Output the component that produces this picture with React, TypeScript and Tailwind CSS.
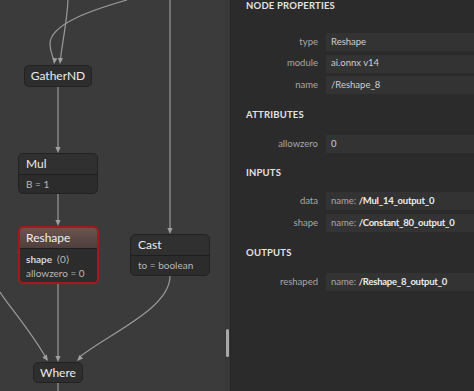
import React from "react";

const font = { fontFamily: 'Lato, "DejaVu Sans", sans-serif' };

function Arrow({ x, y, angle = 0 }: { x: number; y: number; angle?: number }) {
  return (
    <polygon
      points="-2.6,-6 2.6,-6 0,0"
      fill="#a0a0a0"
      transform={`translate(${x} ${y}) rotate(${angle})`}
    />
  );
}

function Edges() {
  return (
    <svg className="absolute inset-0" width={230} height={391} viewBox="0 0 230 391">
      <g fill="none" stroke="#9a9a9a" strokeWidth={1.2}>
        <path d="M68,0 C67,22 62,44 60.5,59" />
        <path d="M127,0 C92,10 50,24 50,44 C50,51 52,55 53.5,59" />
        <path d="M58,87 L58,148" />
        <path d="M58,194 L58,221" />
        <path d="M170,0 L170,229" />
        <path d="M58,284 L58,357" />
        <path d="M170,276 C170,308 112,332 79.5,357" />
        <path d="M0,292 C8,305 30,330 45.5,357" />
        <path d="M58,383 L58,391" />
      </g>
      <Arrow x={54} y={64} angle={8} />
      <Arrow x={60} y={64} angle={4} />
      <Arrow x={58} y={153} />
      <Arrow x={58} y={226} />
      <Arrow x={170} y={234} />
      <Arrow x={58} y={362} />
      <Arrow x={77} y={361} angle={45} />
      <Arrow x={48} y={361} angle={-35} />
    </svg>
  );
}

function NodeProps() {
  const Row = ({ label, children }: { label: string; children: React.ReactNode }) => (
    <div className="flex h-[18px] items-center whitespace-nowrap">
      <div className="w-[87px] shrink-0 text-right text-[9.5px] text-[#a8a8a8]">{label}</div>
      <div className="ml-[8px] flex h-full flex-1 items-center overflow-hidden bg-[#333333] pl-[5px] text-[9.5px] text-[#cfcfcf]">
        {children}
      </div>
    </div>
  );
  const Head = ({ children, className }: { children: React.ReactNode; className: string }) => (
    <div className={`pl-[15px] text-[9.5px] font-bold tracking-[0.2px] text-[#e2e2e2] ${className}`}>{children}</div>
  );
  const Nm = ({ v }: { v: string }) => (
    <span>
      <span className="text-[#a8a8a8]">name: </span>
      <span className="font-bold tracking-[-0.25px] text-[#ececec]">{v}</span>
    </span>
  );
  return (
    <div className="h-[391px] flex-1 overflow-hidden bg-[#2b2b2b]" style={font}>
      <Head className="h-[12px] leading-[12px]">NODE PROPERTIES</Head>
      <div className="mt-[21px] flex flex-col gap-[3.5px]">
        <Row label="type">Reshape</Row>
        <Row label="module">ai.onnx v14</Row>
        <Row label="name">/Reshape_8</Row>
      </div>
      <Head className="mt-[14px] h-[14px] leading-[14px]">ATTRIBUTES</Head>
      <div className="mt-[13px] flex flex-col gap-[3.5px]">
        <Row label="allowzero">0</Row>
      </div>
      <Head className="mt-[13px] h-[14px] leading-[14px]">INPUTS</Head>
      <div className="mt-[12px] flex flex-col gap-[4px]">
        <Row label="data">
          <Nm v="/Mul_14_output_0" />
        </Row>
        <Row label="shape">
          <Nm v="/Constant_80_output_0" />
        </Row>
      </div>
      <Head className="mt-[14px] h-[14px] leading-[14px]">OUTPUTS</Head>
      <div className="mt-[13px] flex flex-col gap-[3.5px]">
        <Row label="reshaped">
          <Nm v="/Reshape_8_output_0" />
        </Row>
      </div>
    </div>
  );
}

export default function App() {
  return (
    <div className="flex h-[391px] w-[474px] overflow-hidden" style={font}>
      <div className="relative h-[391px] w-[230px] shrink-0 bg-[#3b3b3b]">
        <Edges />
        <div className="absolute right-0 top-0 h-full w-[5px] bg-[#383838]" />
        <div className="absolute left-[226px] top-[329px] h-[28px] w-[3px] rounded-sm bg-[#a9a9a9]" />

        <div className="absolute left-[24px] top-[65px] flex h-[22px] w-[68px] items-center justify-center rounded-[5px] border border-[#222] bg-[#2e2e2e] text-[12px] text-[#ececec]">
          GatherND
        </div>

        <div className="absolute left-[18px] top-[153px] flex w-[80px] flex-col overflow-hidden rounded-[5px] border border-[#222] bg-[#2c2c2c]">
          <div className="flex h-[21px] items-center border-b border-[#1e1e1e] bg-[#303030] pl-[7px] text-[12px] text-[#ececec]">Mul</div>
          <div className="flex h-[18px] items-center pl-[7px] text-[10px] text-[#b8b8b8]">B = 1</div>
        </div>

        <div className="absolute left-[18px] top-[226px] flex h-[58px] w-[81px] flex-col overflow-hidden rounded-[5px] border-2 border-[#a3181b] bg-[#2c2c2c]">
          <div className="flex h-[21px] items-center border-b border-[#1e1e1e] bg-gradient-to-b from-[#6a5450] to-[#4f3f3c] pl-[6px] text-[12px] text-[#f0f0f0]">
            Reshape
          </div>
          <div className="flex flex-1 flex-col justify-center pl-[6px] text-[10px] leading-[14px] text-[#b8b8b8]">
            <div className="whitespace-nowrap">
              <span className="font-bold text-[#d6d6d6]">shape</span>
              <span className="ml-[4px]">⟨0⟩</span>
            </div>
            <div className="whitespace-nowrap">allowzero = 0</div>
          </div>
        </div>

        <div className="absolute left-[130px] top-[234px] flex w-[80px] flex-col overflow-hidden rounded-[5px] border border-[#222] bg-[#2c2c2c]">
          <div className="flex h-[21px] items-center border-b border-[#1e1e1e] bg-[#303030] pl-[7px] text-[12px] text-[#ececec]">Cast</div>
          <div className="flex h-[19px] items-center whitespace-nowrap pl-[7px] text-[10px] text-[#b8b8b8]">to = boolean</div>
        </div>

        <div className="absolute left-[33px] top-[362px] flex h-[21px] w-[50px] items-center justify-center rounded-[5px] border border-[#222] bg-[#2e2e2e] text-[12px] text-[#ececec]">
          Where
        </div>
      </div>
      <div className="w-px bg-[#262626]" />
      <NodeProps />
    </div>
  );
}
